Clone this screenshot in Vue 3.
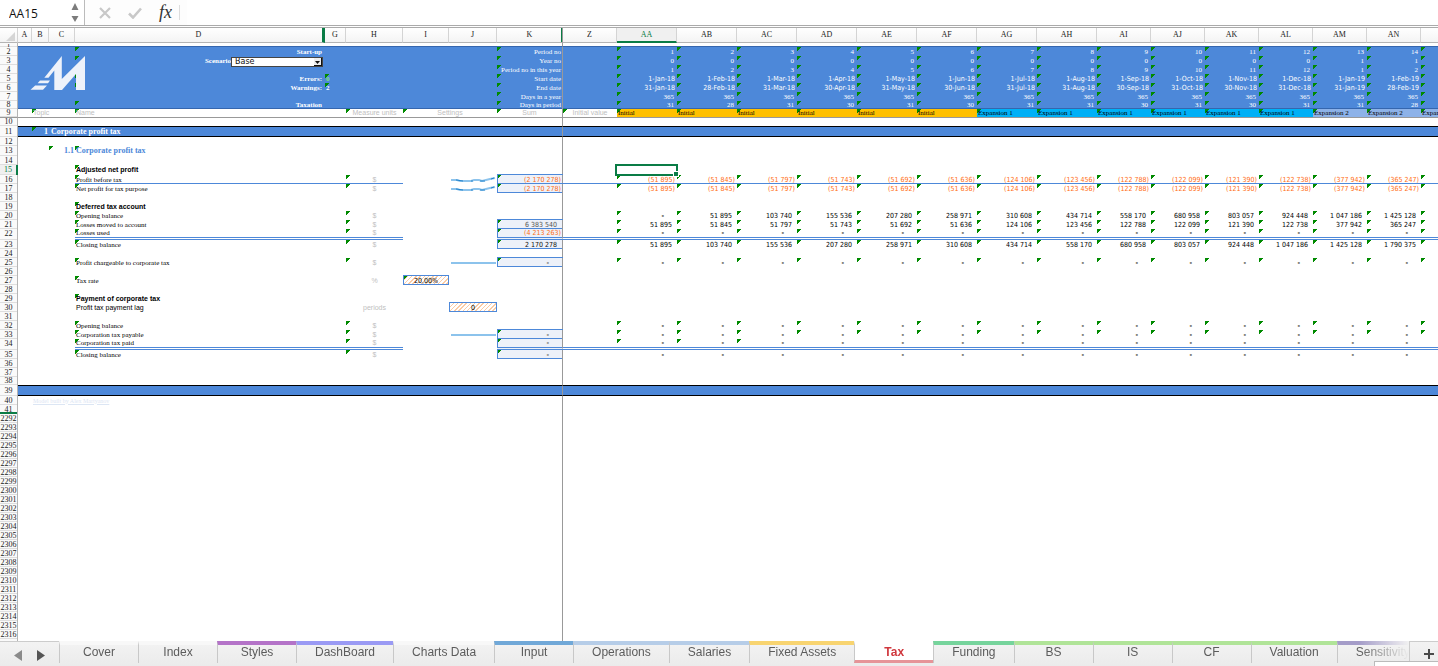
<template>
  <div class="workbook">
    <header class="formula-bar">
      <label class="name-box">
        <input v-model="cellName" type="text" aria-label="Name box" />
        <svg width="8" height="20" viewBox="0 0 8 20" aria-hidden="true">
          <path d="M4 0 L7.5 7 H0.5 Z M4 19 L7.5 13 H0.5 Z" fill="#7c7c7c" />
        </svg>
      </label>
      <div class="formula-actions">
        <button type="button" aria-label="Cancel">
          <svg width="12" height="12" viewBox="0 0 12 12">
            <path d="M1 1 L11 11 M11 1 L1 11" stroke="#c8c8c8" stroke-width="2.2" fill="none" />
          </svg>
        </button>
        <button type="button" aria-label="Enter">
          <svg width="14" height="12" viewBox="0 0 14 12">
            <path d="M1 6.5 L5 10.5 L13 1.5" stroke="#c8c8c8" stroke-width="2.6" fill="none" />
          </svg>
        </button>
        <button type="button" class="fx" aria-label="Insert function">fx</button>
      </div>
      <input v-model="formula" class="formula-input" type="text" aria-label="Formula" />
    </header>

    <main class="sheet">
      <table class="grid">
        <colgroup>
          <col class="w-num" />
          <col v-for="col in columns" :key="col.name" :class="col.width" />
        </colgroup>
        <thead>
          <tr>
            <th class="corner">
              <svg width="9" height="9" viewBox="0 0 9 9" aria-hidden="true">
                <path d="M9 0 V9 H0 Z" fill="#d5d5d5" />
              </svg>
            </th>
            <th
              v-for="col in columns"
              :key="col.name"
              class="col-head"
              :class="{
                active: col.name === 'AA',
                'hidden-after': col.name === 'D',
                frozen: col.name === 'K'
              }"
            >{{ col.name }}</th>
          </tr>
        </thead>
        <tbody>
          <tr v-for="row in rows" :key="row.n" :class="[row.height, row.kind]">
            <th class="row-head" :class="{ active: row.n === 15, 'hidden-after': row.n === 41 }">
              <div>{{ row.n }}</div>
            </th>
            <td
              v-for="cell in row.cells"
              :key="cell.col"
              :class="[cell.cls, { tri: cell.tri, freeze: cell.col === 'K' }]"
              :colspan="cell.span || 1"
            >
              <svg
                v-if="cell.logo"
                class="logo"
                width="56"
                height="36"
                viewBox="0 0 56 36"
                role="img"
                aria-label="Logo"
              >
                <path
                  d="M14.3 21.8 L31.8 0 V23 L55 0 V34 H46 V18 L32 34 H24.3 V14.5 L18.5 21.8 Z
                    M10 24.6 H20 L18 27.2 H7.6 Z
                    M5.2 29.4 H17 L13 33.8 H0.5 Z"
                  fill="#eef2fa"
                />
              </svg>
              <div v-else-if="cell.scenario" class="scenario">
                <label for="scenario">Scenario</label>
                <div class="select-box">
                  <select id="scenario" v-model="scenario">
                    <option>Base</option>
                  </select>
                  <svg width="8" height="8" viewBox="0 0 8 8" aria-hidden="true">
                    <path d="M0 0 H8 V8 H0 Z" fill="#111" />
                    <path d="M0 0 H7 V7 H0 Z" fill="#eee" />
                    <path d="M1 3 H6 L3.5 6 Z" fill="#111" />
                  </svg>
                </div>
              </div>
              <div v-else-if="cell.selected" class="selection"></div>
              <svg v-else-if="cell.spark" class="spark" width="46" height="6" viewBox="0 0 46 6">
                <path :d="sparks[cell.spark]" fill="none" stroke="#8cc3ec" stroke-width="2" />
                <path
                  v-if="cell.spark === 'wave'"
                  d="M6 3 L13 4 M21 4 H23 M30 4 L35 4 M41 2 L44 1"
                  fill="none"
                  stroke="#2484cc"
                  stroke-width="1"
                />
              </svg>
              <a v-else-if="cell.link" href="#">{{ cell.text }}</a>
              <template v-else>{{ cell.text }}</template>
            </td>
          </tr>
          <tr class="h9">
            <th class="row-head"></th>
            <td v-for="col in columns" :key="col.name" :class="{ freeze: col.name === 'K' }"></td>
          </tr>
        </tbody>
      </table>
    </main>

    <footer class="tab-bar">
      <div class="tab-nav">
        <button type="button" aria-label="Previous sheet">
          <svg width="8" height="11" viewBox="0 0 8 11"><path d="M8 0 V11 L0 5.5 Z" fill="#8a8a8a" /></svg>
        </button>
        <button type="button" aria-label="Next sheet">
          <svg width="8" height="11" viewBox="0 0 8 11"><path d="M0 0 V11 L8 5.5 Z" fill="#555" /></svg>
        </button>
      </div>
      <nav class="tabs">
        <button
          v-for="tab in tabs"
          :key="tab.name"
          type="button"
          class="tab"
          :class="[tab.color, { current: tab.name === currentTab }]"
          @click="currentTab = tab.name"
        >{{ tab.name }}</button>
      </nav>
      <button type="button" class="add-tab" aria-label="Add sheet">
        <svg width="10" height="10" viewBox="0 0 10 10">
          <path d="M5 0 V10 M0 5 H10" stroke="#4a4a4a" stroke-width="2" />
        </svg>
      </button>
      <div class="corner-panel"></div>
    </footer>
  </div>
</template>

<script setup>
import { ref } from 'vue';

const cellName = ref('AA15');
const formula = ref('');
const scenario = ref('Base');
const currentTab = ref('Tax');

const columns = [
  { name: 'A', width: 'w-a' },
  { name: 'B', width: 'w-b' },
  { name: 'C', width: 'w-c' },
  { name: 'D', width: 'w-d' },
  { name: 'G', width: 'w-g' },
  { name: 'H', width: 'w-h' },
  { name: 'I', width: 'w-i' },
  { name: 'J', width: 'w-j' },
  { name: 'K', width: 'w-k' },
  { name: 'Z', width: 'w-z' },
  ...['AA', 'AB', 'AC', 'AD', 'AE', 'AF', 'AG', 'AH'].map((name) => ({ name, width: 'w-period' })),
  ...['AI', 'AJ', 'AK', 'AL', 'AM', 'AN', 'AO'].map((name) => ({ name, width: 'w-narrow' }))
];

const periods = columns.slice(10).map((col) => col.name);

const months = ['Jan', 'Feb', 'Mar', 'Apr', 'May', 'Jun', 'Jul', 'Aug', 'Sep', 'Oct', 'Nov', 'Dec'];
const days = [31, 28, 31, 30, 31, 30, 31, 31, 30, 31, 30, 31];

const series = (fn) => Array.from({ length: 14 }, (_, i) => String(fn(i)));
const year = (i) => (i < 12 ? 18 : 19);

const profit = ['(51 895)', '(51 845)', '(51 797)', '(51 743)', '(51 692)', '(51 636)', '(124 106)', '(123 456)', '(122 788)', '(122 099)', '(121 390)', '(122 738)', '(377 942)', '(365 247)'];
const moved = profit.map((v) => v.replace(/[()]/g, ''));
const closing = ['51 895', '103 740', '155 536', '207 280', '258 971', '310 608', '434 714', '558 170', '680 958', '803 057', '924 448', '1 047 186', '1 425 128', '1 790 375'];
const opening = ['-', ...closing.slice(0, 13)];
const dashes = series(() => '-');

const sparks = {
  wave: 'M1 3 H7 L10 4 H21 L24 3 H29 L32 4 L36 3 L40 2 L45 1',
  flat: 'M1 3 H46'
};

const phase = (i) => {
  if (i < 6) return 'Initial';
  return i < 12 ? 'Expansion 1' : 'Expansion 2';
};

const head = (label, values, cls, left = {}) => ({
  cells: { K: { text: label, cls: 'label', tri: true }, ...left },
  values,
  cls,
  tri: 15
});

const line = (label, unit, sum, values, extra = {}) => ({
  cells: {
    D: { text: label, cls: 'name', tri: true },
    H: { text: unit, cls: 'unit', tri: true },
    K: { text: sum, cls: sum ? `box ${numberClass(sum)}` : '', tri: Boolean(sum) },
    ...extra
  },
  values,
  tri: 15
});

function numberClass(text) {
  if (text === '-') return 'dash';
  return text.startsWith('(') ? 'negative' : 'number';
}

const title = (text) => ({ cells: { D: { text, cls: 'title', tri: true } } });

const content = {
  1: { height: 'h4', kind: 'first' },
  2: {
    kind: 'blue',
    ...head('Period no', series((i) => i + 1), 'period', {
      A: { logo: true, cls: 'logo-cell' },
      D: { text: 'Start-up', cls: 'caption', tri: true }
    })
  },
  3: { kind: 'blue', ...head('Year no', series((i) => (i < 12 ? 0 : 1)), 'period', { D: { scenario: true, cls: 'caption', tri: true } }) },
  4: { kind: 'blue', ...head('Period no in this year', series((i) => (i % 12) + 1), 'period') },
  5: {
    kind: 'blue',
    ...head('Start date', series((i) => `1-${months[i % 12]}-${year(i)}`), 'date', {
      D: { text: 'Errors:', cls: 'caption', tri: true },
      G: { text: '0', cls: 'ok', tri: true }
    })
  },
  6: {
    kind: 'blue',
    ...head('End date', series((i) => `${days[i % 12]}-${months[i % 12]}-${year(i)}`), 'date', {
      D: { text: 'Warnings:', cls: 'caption', tri: true },
      G: { text: '2', cls: 'warn', tri: true }
    })
  },
  7: { kind: 'blue', ...head('Days in a year', series(() => 365), 'period') },
  8: {
    height: 'h8',
    kind: 'blue last',
    ...head('Days in period', series((i) => days[i % 12]), 'period', { D: { text: 'Taxation', cls: 'caption', tri: true } })
  },
  9: {
    kind: 'titles',
    cells: {
      B: { text: 'Topic', cls: 'hint', tri: true },
      D: { text: 'Name', cls: 'hint', tri: true },
      H: { text: 'Measure units', cls: 'unit', tri: true },
      I: { text: 'Settings', cls: 'unit', tri: true, span: 2 },
      K: { text: 'Sum', cls: 'unit', tri: true },
      Z: { text: 'Initial value', cls: 'unit', tri: true },
      ...Object.fromEntries(periods.map((name, i) => [name, {
        text: phase(i),
        cls: ['phase', phase(i).toLowerCase().replace(' ', '-')],
        tri: true
      }]))
    }
  },
  10: { height: 'h8' },
  11: {
    height: 'h11',
    kind: 'band',
    cells: { B: { text: '1', cls: 'right', tri: true }, C: { text: 'Corporate profit tax' } }
  },
  13: {
    height: 'h10',
    kind: 'section',
    cells: { C: { text: '1.1', cls: 'right', tri: true }, D: { text: 'Corporate profit tax', tri: true } }
  },
  15: { height: 'h10', cells: { ...title('Adjusted net profit').cells, AA: { selected: true, cls: 'selected' } } },
  16: { kind: 'underline', ...line('Profit before tax', '$', '(2 170 278)', profit, { J: { spark: 'wave' } }) },
  17: line('Net profit for tax purpose', '$', '(2 170 278)', profit, { J: { spark: 'wave' } }),
  19: title('Deferred tax account'),
  20: line('Opening balance', '$', '', opening),
  21: line('Losses moved to account', '$', '6 383 540', moved),
  22: { height: 'h11', kind: 'double', ...line('Losses used', '$', '(4 213 263)', dashes) },
  23: { kind: 'total', ...line('Closing balance', '$', '2 170 278', closing) },
  25: line('Profit chargeable to corporate tax', '$', '-', dashes, { J: { spark: 'flat' } }),
  27: {
    cells: {
      D: { text: 'Tax rate', cls: 'name', tri: true },
      H: { text: '%', cls: 'unit' },
      I: { text: '20,00%', cls: 'entry', tri: true }
    }
  },
  29: title('Payment of corporate tax'),
  30: {
    cells: {
      D: { text: 'Profit tax payment lag', cls: 'plain' },
      H: { text: 'periods', cls: 'unit' },
      J: { text: '0', cls: 'entry' }
    }
  },
  32: line('Opening balance', '$', '', dashes),
  33: line('Corporation tax payable', '$', '-', dashes, { J: { spark: 'flat' } }),
  34: { height: 'h11', kind: 'double', ...line('Corporation tax paid', '$', '-', dashes), tri: 3 },
  35: { ...line('Closing balance', '$', '-', dashes), tri: 0 },
  38: { height: 'h8' },
  39: { height: 'h11', kind: 'band' },
  40: { cells: { B: { text: 'Model built by Alex Martyanov', cls: 'credit', link: true } } }
};

const buildRow = (n) => {
  const data = content[n] || {};
  const cells = [];
  let skip = 0;
  columns.forEach((col) => {
    if (skip > 0) {
      skip -= 1;
      return;
    }
    const cell = { col: col.name, ...(data.cells?.[col.name] || {}) };
    const i = periods.indexOf(col.name);
    if (data.values && i >= 0) {
      cell.text = data.values[i];
      cell.cls = data.cls || numberClass(cell.text || '');
      cell.tri = i < data.tri;
    }
    skip = (cell.span || 1) - 1;
    cells.push(cell);
  });
  return { n, height: data.height || 'h9', kind: data.kind, cells };
};

// rows 42-2291 are collapsed
const rows = [
  ...Array.from({ length: 41 }, (_, i) => i + 1),
  ...Array.from({ length: 25 }, (_, i) => i + 2292)
].map(buildRow);

const tabs = [
  { name: 'Cover' },
  { name: 'Index' },
  { name: 'Styles', color: 'purple' },
  { name: 'DashBoard', color: 'violet' },
  { name: 'Charts Data' },
  { name: 'Input', color: 'blue' },
  { name: 'Operations', color: 'sky' },
  { name: 'Salaries', color: 'sky' },
  { name: 'Fixed Assets', color: 'yellow' },
  { name: 'Tax', color: 'red' },
  { name: 'Funding', color: 'green' },
  { name: 'BS', color: 'lime' },
  { name: 'IS', color: 'lime' },
  { name: 'CF', color: 'lime' },
  { name: 'Valuation', color: 'lime' },
  { name: 'Sensitivity', color: 'lilac' }
];
</script>

<style>
body {
  margin: 0;
  background: #fff;
}
</style>

<style scoped>
.workbook {
  display: flex;
  flex-direction: column;
  height: 100vh;
  overflow: hidden;
  font-family: "Liberation Sans", Arial, sans-serif;
}

button {
  padding: 0;
  border: 0;
  background: none;
  font: inherit;
  color: inherit;
}

.formula-bar {
  display: flex;
  flex: none;
  height: 25px;
  border-bottom: 3px double #aaa;
  background: #fff;
}

.name-box {
  display: flex;
  align-items: center;
  box-sizing: border-box;
  width: 85px;
  padding: 0 5px 0 9px;
  border-right: 1px solid #bbb;
}

.name-box input {
  flex: 1;
  min-width: 0;
  padding: 2px 0 0;
  border: 0;
  outline: 0;
  font: 12px "Open Sans", sans-serif;
  color: #111;
}

.formula-actions {
  display: flex;
  align-items: center;
  gap: 17px;
  box-sizing: border-box;
  width: 102px;
  padding-left: 14px;
  background: #fdfdfd;
}

.formula-actions button {
  display: flex;
}

.formula-actions .fx {
  padding-right: 7px;
  border-right: 1px solid #ddd;
  font: italic 18px/15px "Liberation Serif", serif;
  color: #333;
}

.formula-input {
  flex: 1;
  border: 0;
  outline: 0;
}

.sheet {
  flex: 1;
  min-height: 0;
  overflow: hidden;
}

.grid {
  width: 100%;
  table-layout: fixed;
  border-collapse: separate;
  border-spacing: 0;
  font-size: 7px;
  line-height: 8px;
  color: #000;
}

.w-num { width: 18px; }
.w-a { width: 14px; }
.w-b { width: 17px; }
.w-c { width: 26px; }
.w-d { width: 250px; }
.w-g { width: 21px; }
.w-h { width: 57px; }
.w-i { width: 46px; }
.w-j { width: 48px; }
.w-k { width: 66px; }
.w-z { width: 54px; }
.w-period { width: 60px; }
.w-narrow { width: 54px; }

th,
td {
  box-sizing: border-box;
  padding: 0 1px;
  text-align: left;
  vertical-align: middle;
  white-space: nowrap;
}

.h4 { height: 4px; }
.h8 { height: 8px; }
.h9 { height: 9px; }
.h10 { height: 10px; }
.h11 { height: 11px; }

.corner,
.col-head {
  height: 15px;
  border-right: 1px solid #d4d4d4;
  border-bottom: 1px solid #b4b4b4;
  background: linear-gradient(#fff, #f4f4f4);
  font: 8px/8px "Liberation Serif", serif;
  text-align: center;
  color: #222;
}

.corner {
  padding: 0;
  text-align: right;
}

.corner svg {
  display: block;
  margin: 2px 2px 0 auto;
}

.col-head.active {
  border-bottom: 2px solid #0a7c46;
  background: #f0f0f0;
  color: #0a7c46;
}

.col-head.hidden-after {
  border-right: 3px solid #0a7c46;
}

.col-head.frozen {
  border-right: 1px solid #999;
  box-shadow: inset -1px 0 0 #0a7c46, 1px 0 0 #0a7c46;
}

.row-head {
  padding: 0;
  border-right: 1px solid #b4b4b4;
  box-shadow: inset 0 -1px 0 #dedede;
  background: #fafafa;
  font: 8px/8px "Liberation Serif", serif;
  text-align: center;
  color: #222;
}

.row-head.active {
  border-right: 2px solid #0a7c46;
  background: #f0f0f0;
  color: #0a7c46;
}

.row-head.hidden-after {
  box-shadow: inset 0 -2px 0 #0a7c46;
}

.first .row-head div {
  height: 3px;
  line-height: 4px;
  overflow: hidden;
}

.first td {
  padding: 0;
  border-bottom: 1px solid #3566ae;
}

.freeze {
  border-right: 1px solid #999;
}

.tri {
  background-image: linear-gradient(135deg, #008a00 45%, transparent 45%);
  background-repeat: no-repeat;
  background-size: 5px 5px;
}

.blue td {
  background-color: #4d88d9;
  font-family: "Liberation Serif", serif;
  color: #fff;
}

.blue.last td {
  box-shadow: inset 0 -1px 0 #3566ae;
}

.blue .label {
  text-align: right;
}

.blue .caption {
  padding-right: 3px;
  font-weight: bold;
  text-align: right;
}

.blue .period {
  padding-right: 3px;
  text-align: right;
}

.blue .date {
  padding-right: 2px;
  font-family: "DejaVu Sans Condensed", "DejaVu Sans", sans-serif;
  text-align: right;
}

.blue .ok {
  font-weight: bold;
  color: #7fe07f;
}

.blue .warn {
  font-weight: bold;
}

.logo-cell {
  position: relative;
}

.logo {
  position: absolute;
  top: 9px;
  left: 12px;
}

.scenario {
  display: flex;
  justify-content: flex-end;
  height: 8px;
  margin-right: -1px;
}

.select-box {
  display: flex;
  align-items: center;
  box-sizing: border-box;
  width: 92px;
  height: 10px;
  border: 1px solid #444;
  background: #fff;
}

.select-box select {
  flex: 1;
  min-width: 0;
  height: 8px;
  padding: 0 3px;
  border: 0;
  outline: 0;
  appearance: none;
  background: none;
  font: 8px/8px "DejaVu Sans", sans-serif;
  color: #111;
}

.titles th,
.titles td {
  border-bottom: 1px solid #999;
}

.hint,
.unit {
  color: #c0c0c0;
}

.unit {
  text-align: center;
}

.phase {
  font-family: "Liberation Serif", serif;
}

.initial { background-color: #ffc000; }
.expansion-1 { background-color: #00b0f6; }
.expansion-2 { background-color: #8db2e8; }

.band td {
  border-top: 1px solid #000;
  border-bottom: 1px solid #000;
  background-color: #4d88d9;
  font: bold 8px/8px "Liberation Serif", serif;
  color: #fff;
}

.band td:nth-child(4) {
  padding-left: 2px;
}

.section td {
  font: bold 8px/8px "Liberation Serif", serif;
  color: #4d88d9;
}

td.right {
  padding-right: 1px;
  text-align: right;
}

.title {
  font-weight: bold;
}

.name {
  font-family: "Liberation Serif", serif;
}

.number,
.negative,
.dash,
.entry {
  font-family: "DejaVu Sans Condensed", "DejaVu Sans", sans-serif;
  text-align: right;
}

.number { padding-right: 5px; }

.dash {
  padding-right: 13px;
  font-weight: bold;
}

.negative {
  padding-right: 2px;
  color: #ff6d14;
}

.box {
  background-color: #edf1f9;
  box-shadow: inset 1px 0 0 #4d88d9, inset 0 -1px 0 #4d88d9, 0 -1px 0 #4d88d9;
  color: #555;
}

.box.negative {
  padding-right: 1px;
  color: #ff6d14;
}

.total .box {
  color: #111;
}

.entry {
  background-color: #fff;
  background-image: repeating-linear-gradient(135deg, #fbcba4 0 1px, #fff 1px 3px);
  box-shadow: inset 1px 0 0 #4d88d9, inset -1px -1px 0 #4d88d9, 0 -1px 0 #4d88d9;
  text-align: center;
}

.entry.tri {
  background-image:
    linear-gradient(135deg, #008a00 45%, transparent 45%),
    repeating-linear-gradient(135deg, #fbcba4 0 1px, #fff 1px 3px);
  background-repeat: no-repeat, repeat;
  background-size: 5px 5px, auto;
}

/* rules run under D:H and from K on, columns I and J stay open */
.underline td:where(:nth-child(n + 5):not(:nth-child(8), :nth-child(9))) {
  box-shadow: inset 0 -1px 0 #4d88d9;
}

.underline td.box {
  box-shadow: inset 1px 0 0 #4d88d9, inset 0 -1px 0 #4d88d9, 0 -1px 0 #4d88d9;
}

.double td:where(:nth-child(n + 5):not(:nth-child(8), :nth-child(9))) {
  border-bottom: 3px double #4d88d9;
}

.double .row-head {
  padding-bottom: 2px;
}

.double .box {
  box-shadow: inset 1px 0 0 #4d88d9;
}

.spark {
  display: block;
}

.selected {
  position: relative;
}

.selection {
  position: absolute;
  inset: -1px -1px -1px -2px;
  border: 2px solid #0a7c46;
}

.selection::after {
  content: "";
  position: absolute;
  right: -3px;
  bottom: -3px;
  width: 4px;
  height: 4px;
  border: 1px solid #fff;
  background: #0a7c46;
}

.credit {
  font: 6px/8px "Liberation Serif", serif;
}

.credit a {
  color: #dce6f4;
}

.tab-bar {
  position: relative;
  display: flex;
  flex: none;
  box-sizing: border-box;
  height: 25px;
  background: linear-gradient(#f3f3f3, #ebebeb);
  font-size: 12px;
  color: #5c5c5c;
}

.tab-nav {
  display: flex;
  align-items: center;
  gap: 15px;
  box-sizing: border-box;
  width: 59px;
  padding: 3px 0 0 14px;
  border-top: 1px solid #ccc;
}

.tab-nav button {
  display: flex;
}

.tabs {
  display: flex;
  flex: 1;
  min-width: 0;
  height: 22px;
  overflow: hidden;
  mask-image: linear-gradient(to left, transparent, #000 50px);
}

.tab {
  flex: none;
  box-sizing: border-box;
  min-width: 79px;
  padding: 0 18px 4px;
  border-top: 4px solid #f8f8f8;
  border-left: 1px solid #c8c8c8;
  line-height: 14px;
}

.tab.purple { border-top-color: #b473c8; }
.tab.violet { border-top-color: #9a9af4; }
.tab.blue { border-top-color: #70a8d8; }
.tab.sky { border-top-color: #b6cde8; }
.tab.yellow { border-top-color: #f8d470; }
.tab.green { border-top-color: #76d49c; }
.tab.lime { border-top-color: #b0e498; }
.tab.lilac { border-top-color: #a49cc8; }

.tab.current {
  padding-bottom: 1px;
  border-top-color: #fff;
  border-bottom: 3px solid #e69498;
  background: #fff;
  font-weight: bold;
  color: #d0383e;
}

.add-tab {
  display: flex;
  align-items: center;
  justify-content: center;
  box-sizing: border-box;
  width: 29px;
  padding: 0 0 0 9px;
  border-top: 1px solid #ccc;
  border-left: 1px solid #ccc;
}

.corner-panel {
  position: absolute;
  right: 0;
  bottom: 0;
  width: 63px;
  height: 4px;
  border-top: 1px solid #bbb;
  border-left: 1px solid #bbb;
  background: #fff;
}
</style>
